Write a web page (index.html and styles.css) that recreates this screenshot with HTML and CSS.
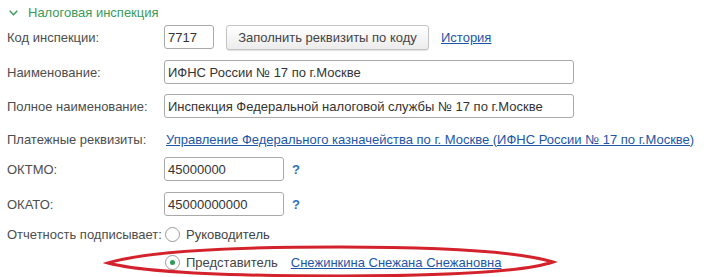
FILE: index.html
```html
<!DOCTYPE html>
<html lang="ru">
<head>
<meta charset="utf-8">
<link rel="stylesheet" href="styles.css">
</head>
<body>
<div class="form">
  <div class="group-title">
    <svg class="chev" width="9" height="6" viewBox="0 0 9 6"><path d="M0.7 0.8 L4.5 4.8 L8.3 0.8" fill="none" stroke="#3a9a5a" stroke-width="1.4"/></svg>
    <span>Налоговая инспекция</span>
  </div>
  <div class="row r1">
    <div class="label">Код инспекции:</div>
    <div class="field w-code">7717</div>
    <div class="btn">Заполнить реквизиты по коду</div>
    <a class="link hist">История</a>
  </div>
  <div class="row r2">
    <div class="label">Наименование:</div>
    <div class="field w-long">ИФНС России № 17 по г.Москве</div>
  </div>
  <div class="row r3">
    <div class="label">Полное наименование:</div>
    <div class="field w-long">Инспекция Федеральной налоговой службы № 17 по г.Москве</div>
  </div>
  <div class="row r4">
    <div class="label">Платежные реквизиты:</div>
    <a class="link pay">Управление Федерального казначейства по г. Москве (ИФНС России № 17 по г.Москве)</a>
  </div>
  <div class="row r5">
    <div class="label">ОКТМО:</div>
    <div class="field w-mid">45000000</div>
    <span class="q">?</span>
  </div>
  <div class="row r6">
    <div class="label">ОКАТО:</div>
    <div class="field w-mid">45000000000</div>
    <span class="q">?</span>
  </div>
  <div class="row r7">
    <div class="label">Отчетность подписывает:</div>
    <span class="radio"></span>
    <span class="rtext">Руководитель</span>
  </div>
  <div class="row r8">
    <div class="label"></div>
    <span class="radio on"></span>
    <span class="rtext">Представитель</span>
    <a class="link person">Снежинкина Снежана Снежановна</a>
  </div>
</div>
<svg class="ellipse" width="708" height="277" viewBox="0 0 708 277">
  <path d="M108 263 C 150 250, 250 247, 340 247 C 440 247, 520 252, 553 262 C 520 273, 440 276, 340 276 C 250 276, 150 274, 108 263 Z" fill="none" stroke="#d3222c" stroke-width="3"/>
</svg>
</body>
</html>
```
FILE: styles.css
```css
html, body {
  margin: 0;
  padding: 0;
  background: #fff;
}
body {
  width: 708px;
  height: 277px;
  overflow: hidden;
  position: relative;
  font-family: Arial, "Liberation Sans", sans-serif;
  font-size: 13px;
  color: #4d4d4d;
}
.form {
  padding-left: 7px;
  display: flex;
  flex-direction: column;
}
.group-title {
  height: 25px;
  display: flex;
  align-items: center;
  color: #3a9a5a;
  padding-left: 2px;
}
.chev {
  margin-right: 10px;
  margin-top: 1px;
}
.row {
  display: flex;
  align-items: center;
  height: 24px;
}
.r2 { margin-top: 11px; }
.r3 { margin-top: 10px; }
.r4 { margin-top: 9px; }
.r5 { margin-top: 6px; }
.r6 { margin-top: 11px; }
.r7 { margin-top: 6px; }
.r8 { margin-top: 4px; }
.label {
  width: 157px;
  flex: none;
}
.field {
  box-sizing: border-box;
  height: 24px;
  border: 1px solid #a9a9a9;
  border-radius: 3px;
  padding: 0 4px 0 3px;
  display: flex;
  align-items: center;
  color: #333;
  background: #fff;
}
.w-code { width: 50px; }
.w-long { width: 410px; }
.w-mid { width: 120px; }
.btn {
  box-sizing: border-box;
  height: 25px;
  margin-left: 12px;
  width: 203px;
  border: 1px solid #c4c4c4;
  border-radius: 3px;
  background: linear-gradient(#ffffff, #ececec);
  box-shadow: 0 1px 1px rgba(0,0,0,0.12);
  display: flex;
  align-items: center;
  justify-content: center;
  color: #444;
}
.link {
  color: #1c56a8;
  text-decoration: underline;
}
.hist { margin-left: 12px; }
.pay { margin-left: 2px; }
.q {
  color: #2e6fb8;
  font-weight: bold;
  margin-left: 8px;
}
.radio {
  box-sizing: border-box;
  width: 15px;
  height: 15px;
  border: 1px solid #9a9a9a;
  border-radius: 50%;
  background: #fff;
  margin-left: 1px;
  margin-right: 6px;
  display: flex;
  align-items: center;
  justify-content: center;
}
.radio.on::after {
  content: "";
  width: 5px;
  height: 5px;
  border-radius: 50%;
  background: #2f9a55;
}
.rtext { color: #444; }
.person { margin-left: 13px; }
.ellipse {
  position: absolute;
  left: 0;
  top: 0;
  pointer-events: none;
}
```
